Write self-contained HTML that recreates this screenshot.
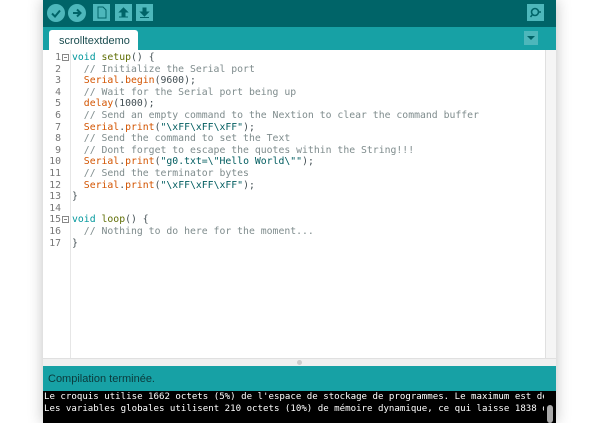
<!DOCTYPE html>
<html><head><meta charset="utf-8"><style>
*{margin:0;padding:0;box-sizing:border-box}
body{width:600px;height:423px;background:#fff;position:relative;overflow:hidden;font-family:"Liberation Sans",sans-serif}
.win{position:absolute;left:43px;top:0;width:513px;height:423px;box-shadow:0 0 14px rgba(0,0,0,.25)}
.tb{position:absolute;left:0;top:0;width:513px;height:27px;background:#006468}
.tabs{position:absolute;left:0;top:27px;width:513px;height:23px;background:#17a1a5}
.tab{position:absolute;left:6px;top:3px;width:89px;height:20px;background:#fff;border-radius:3px 3px 0 0;font-size:11px;color:#1a4c4f;padding:5px 0 0 10px}
.ed{position:absolute;left:0;top:50px;width:513px;height:308px;background:#fff}
.gut{position:absolute;left:0;top:0;width:28px;height:308px;border-right:1px solid #e6e6e6}
.rs{position:absolute;left:502px;top:0;width:11px;height:308px;background:#f5f5f5;border-left:1px solid #e0e0e0}
pre{font-family:"DejaVu Sans Mono",monospace;font-size:9.8px;line-height:11.6px;position:absolute;top:2px}
.num{left:0;width:18px;text-align:right;color:#777}
.code{left:29px;color:#434f54}
.k{color:#00979c}.f{color:#5e6d03}.s{color:#d35400}.q{color:#005c5f}.c{color:#7f8c8d}
.div{position:absolute;left:0;top:358px;width:513px;height:8px;background:#f0f0f0;border-top:1px solid #e0e0e0}
.st{position:absolute;left:0;top:366px;width:513px;height:25px;background:#17a1a5;color:#0b3a3c;font-size:11px;padding:7px 0 0 5px}
.conbg{position:absolute;left:0;top:391px;width:513px;height:32px;background:#000}
.con{position:absolute;left:0;top:391px;width:501px;height:32px;color:#fff;font-family:"DejaVu Sans Mono",monospace;font-size:9.1px;line-height:12px;white-space:pre;overflow:hidden;padding-left:1px}
.btn{position:absolute;top:4px;width:18px;height:18px}
.fold{position:absolute;left:19px;width:7px;height:7px;border:1px solid #888;background:#fff}
.fold:after{content:"";position:absolute;left:1px;top:2px;width:3px;height:1px;background:#888}
</style></head><body>
<div class="win">
<div class="tb">
<svg class="btn" style="left:4px" viewBox="0 0 18 18"><circle cx="9" cy="9" r="9" fill="#4db7bb"/><path d="M5 9.5l3 3 5-6" stroke="#006468" stroke-width="2" fill="none"/></svg>
<svg class="btn" style="left:25px" viewBox="0 0 18 18"><circle cx="9" cy="9" r="9" fill="#4db7bb"/><path d="M5 9h7M9 5.5l3.5 3.5-3.5 3.5" stroke="#006468" stroke-width="2" fill="none"/></svg>
<svg class="btn" style="left:50px;width:17px;height:17px" viewBox="0 0 17 17"><rect width="17" height="17" fill="#4db7bb"/><path d="M5 3h5l3 3v8H5z" fill="none" stroke="#006468"/></svg>
<svg class="btn" style="left:72px;width:17px;height:17px" viewBox="0 0 17 17"><rect width="17" height="17" fill="#4db7bb"/><path d="M8.5 4l4 4h-2.5v4h-3v-4H4.5z M4 13h9" fill="#006468" stroke="#006468"/></svg>
<svg class="btn" style="left:93px;width:17px;height:17px" viewBox="0 0 17 17"><rect width="17" height="17" fill="#4db7bb"/><path d="M8.5 12l4-4h-2.5V4h-3v4H4.5z M4 13.5h9" fill="#006468" stroke="#006468"/></svg>
<svg class="btn" style="left:484px;width:17px;height:17px" viewBox="0 0 17 17"><rect width="17" height="17" fill="#4db7bb"/><circle cx="8" cy="8" r="3.5" fill="none" stroke="#006468" stroke-width="1.6"/><path d="M5.5 10.5l-2 2.5M12 8h2" stroke="#006468" stroke-width="1.5"/></svg>
</div>
<div class="tabs"><div class="tab">scrolltextdemo</div>
<div style="position:absolute;left:481px;top:4px;width:14px;height:14px;background:#4db7bb"><div style="margin:5px 0 0 3px;width:0;height:0;border-left:4px solid transparent;border-right:4px solid transparent;border-top:4px solid #006468"></div></div></div>
<div class="ed">
<div class="gut"></div><div class="rs"></div>
<pre class="num">1
2
3
4
5
6
7
8
9
10
11
12
13
14
15
16
17</pre>
<div class="fold" style="top:4px"></div><div class="fold" style="top:166px"></div>
<pre class="code"><span class="k">void</span> <span class="f">setup</span>() {
  <span class="c">// Initialize the Serial port</span>
  <span class="s">Serial</span>.<span class="s">begin</span>(9600);
  <span class="c">// Wait for the Serial port being up</span>
  <span class="s">delay</span>(1000);
  <span class="c">// Send an empty command to the Nextion to clear the command buffer</span>
  <span class="s">Serial</span>.<span class="s">print</span>(<span class="q">"\xFF\xFF\xFF"</span>);
  <span class="c">// Send the command to set the Text</span>
  <span class="c">// Dont forget to escape the quotes within the String!!!</span>
  <span class="s">Serial</span>.<span class="s">print</span>(<span class="q">"g0.txt=\"Hello World\""</span>);
  <span class="c">// Send the terminator bytes</span>
  <span class="s">Serial</span>.<span class="s">print</span>(<span class="q">"\xFF\xFF\xFF"</span>);
}

<span class="k">void</span> <span class="f">loop</span>() {
  <span class="c">// Nothing to do here for the moment...</span>
}</pre>
</div>
<div class="div"><div style="position:absolute;left:254px;top:1px;width:5px;height:5px;border-radius:50%;background:#ccc"></div></div>
<div class="st">Compilation terminée.</div>
<div class="conbg"></div>
<div class="con">Le croquis utilise 1662 octets (5%) de l'espace de stockage de programmes. Le maximum est de
Les variables globales utilisent 210 octets (10%) de mémoire dynamique, ce qui laisse 1838 o</div>
<div style="position:absolute;left:504px;top:405px;width:6px;height:18px;border-radius:3px;background:#aaa"></div>
</div>
</body></html>
